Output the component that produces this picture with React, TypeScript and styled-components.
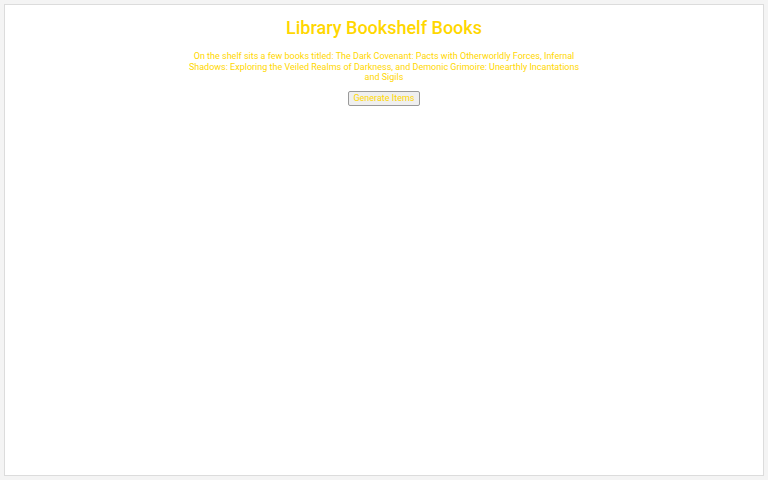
import React, {FC, useState} from "react";
import styled, {createGlobalStyle} from "styled-components";

const GlobalStyle = createGlobalStyle`
  html, body {
    margin: 0;
    padding: 0;
    background: #f4f4f4;
    font-family: Roboto, "Liberation Sans", sans-serif;
  }
  * {
    box-sizing: border-box;
  }
`;

const Page = styled.div`
  padding: 4px;
  height: 480px;
`;

const Panel = styled.main`
  height: 472px;
  background: #fff;
  border: 1px solid #dcdcdc;
  display: flex;
  flex-direction: column;
  align-items: center;
  padding-top: 12px;
  color: #ffd700;
`;

const Title = styled.h1`
  margin: 0;
  font-size: 18px;
  font-weight: 500;
  line-height: 21px;
`;

const Description = styled.p`
  margin: 13px 0 0;
  max-width: 400px;
  font-size: 9px;
  line-height: 10.5px;
  text-align: center;
`;

const GenerateButton = styled.button`
  margin-top: 8px;
  height: 15px;
  padding: 0 4px;
  font-family: Roboto, "Liberation Sans", sans-serif;
  font-size: 9px;
  color: #ffd700;
  background: #efefef;
  border: 1px solid #9a9a9a;
  border-radius: 2px;
  cursor: pointer;
`;

const books = [
  "The Dark Covenant: Pacts with Otherworldly Forces",
  "Infernal Shadows: Exploring the Veiled Realms of Darkness",
  "Demonic Grimoire: Unearthly Incantations and Sigils",
];

const App: FC = () => {
  const [items, setItems] = useState<string[]>(books);

  const listing =
    items.slice(0, -1).join(", ") + ", and " + items[items.length - 1];

  return (
    <>
      <GlobalStyle/>
      <Page>
        <Panel>
          <Title>Library Bookshelf Books</Title>
          <Description>On the shelf sits a few books titled: {listing}</Description>
          <GenerateButton onClick={() => setItems([...items].sort(() => Math.random() - 0.5))}>
            Generate Items
          </GenerateButton>
        </Panel>
      </Page>
    </>
  );
};

export default App;
